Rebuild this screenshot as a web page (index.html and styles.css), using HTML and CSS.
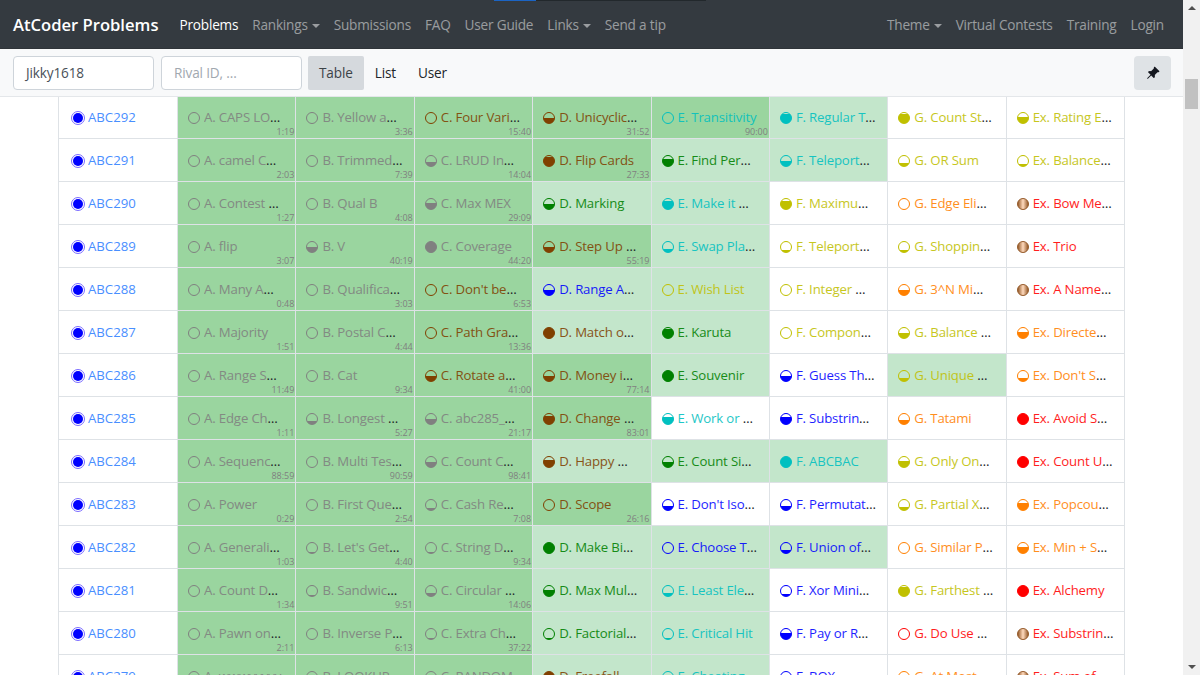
FILE: index.html
```html
<!DOCTYPE html>
<html lang="en">
<head>
<meta charset="utf-8">
<title>AtCoder Problems</title>
<link rel="stylesheet" href="styles.css">
</head>
<body>
<div class="page">
<div class="content">
<nav class="nav">
<div class="progress"><span class="progress-fill"></span></div>
<a class="brand">AtCoder Problems</a>
<ul class="menu">
<li class="active">Problems</li><li class="caret">Rankings</li><li>Submissions</li><li>FAQ</li><li>User Guide</li><li class="caret">Links</li><li>Send a tip</li>
</ul>
<ul class="menu menu-right">
<li class="caret">Theme</li><li>Virtual Contests</li><li>Training</li><li>Login</li>
</ul>
</nav>
<div class="toolbar">
<div class="field">Jikky1618</div>
<div class="field placeholder">Rival ID, ...</div>
<div class="tabs"><span class="tab tab-on">Table</span><span class="tab">List</span><span class="tab">User</span></div>
<button class="pin"><svg viewBox="0 0 16 16" width="14" height="14"><path fill="#14171f" d="M9.828.722a.5.5 0 0 1 .354.146l4.95 4.95a.5.5 0 0 1 0 .707c-.48.48-1.072.588-1.503.588-.177 0-.335-.018-.46-.039l-3.134 3.134a5.927 5.927 0 0 1 .16 1.013c.046.702-.032 1.687-.72 2.375a.5.5 0 0 1-.707 0l-2.829-2.828-3.182 3.182c-.195.195-1.219.902-1.414.707-.195-.195.512-1.22.707-1.414l3.182-3.182-2.828-2.829a.5.5 0 0 1 0-.707c.688-.688 1.673-.767 2.375-.72a5.922 5.922 0 0 1 1.013.16l3.134-3.133a2.772 2.772 0 0 1-.04-.461c0-.43.108-1.022.589-1.503a.5.5 0 0 1 .353-.146z"/></svg></button>
</div>
<main class="scroller">
<table class="grid">
<colgroup><col class="col-contest"><col><col><col><col><col><col><col><col></colgroup>
<tbody>
<tr><td class="contest"><i class="ring"></i><a>ABC292</a></td>
<td class="dk"><i class="dot grey" style="--f:0%"></i><a class="grey">A. CAPS LO</a><b>…</b><small>1:19</small></td>
<td class="dk"><i class="dot grey" style="--f:0%"></i><a class="grey">B. Yellow a</a><b>…</b><small>3:36</small></td>
<td class="dk"><i class="dot brown" style="--f:0%"></i><a class="brown">C. Four Vari</a><b>…</b><small>15:40</small></td>
<td class="dk"><i class="dot brown" style="--f:50%"></i><a class="brown">D. Unicyclic</a><b>…</b><small>31:52</small></td>
<td class="dk"><i class="dot cyan" style="--f:0%"></i><a class="cyan">E. Transitivity</a><small>90:00</small></td>
<td class="lt"><i class="dot cyan" style="--f:90%"></i><a class="cyan">F. Regular T</a><b>…</b></td>
<td><i class="dot yellow" style="--f:90%"></i><a class="yellow">G. Count St</a><b>…</b></td>
<td><i class="dot yellow" style="--f:65%"></i><a class="yellow">Ex. Rating E</a><b>…</b></td></tr>
<tr><td class="contest"><i class="ring"></i><a>ABC291</a></td>
<td class="dk"><i class="dot grey" style="--f:0%"></i><a class="grey">A. camel C</a><b>…</b><small>2:03</small></td>
<td class="dk"><i class="dot grey" style="--f:0%"></i><a class="grey">B. Trimmed</a><b>…</b><small>7:39</small></td>
<td class="dk"><i class="dot grey" style="--f:45%"></i><a class="grey">C. LRUD In</a><b>…</b><small>14:04</small></td>
<td class="dk"><i class="dot brown" style="--f:90%"></i><a class="brown">D. Flip Cards</a><small>27:33</small></td>
<td class="lt"><i class="dot green" style="--f:70%"></i><a class="green">E. Find Per</a><b>…</b></td>
<td class="lt"><i class="dot cyan" style="--f:50%"></i><a class="cyan">F. Teleport</a><b>…</b></td>
<td><i class="dot yellow" style="--f:35%"></i><a class="yellow">G. OR Sum</a></td>
<td><i class="dot yellow" style="--f:15%"></i><a class="yellow">Ex. Balance</a><b>…</b></td></tr>
<tr><td class="contest"><i class="ring"></i><a>ABC290</a></td>
<td class="dk"><i class="dot grey" style="--f:0%"></i><a class="grey">A. Contest </a><b>…</b><small>1:27</small></td>
<td class="dk"><i class="dot grey" style="--f:0%"></i><a class="grey">B. Qual B</a><small>4:08</small></td>
<td class="dk"><i class="dot grey" style="--f:60%"></i><a class="grey">C. Max MEX</a><small>29:09</small></td>
<td class="lt"><i class="dot green" style="--f:50%"></i><a class="green">D. Marking</a></td>
<td class="lt"><i class="dot cyan" style="--f:85%"></i><a class="cyan">E. Make it </a><b>…</b></td>
<td><i class="dot yellow" style="--f:85%"></i><a class="yellow">F. Maximu</a><b>…</b></td>
<td><i class="dot orange" style="--f:0%"></i><a class="orange">G. Edge Eli</a><b>…</b></td>
<td><i class="dot bronze"></i><a class="red">Ex. Bow Me</a><b>…</b></td></tr>
<tr><td class="contest"><i class="ring"></i><a>ABC289</a></td>
<td class="dk"><i class="dot grey" style="--f:0%"></i><a class="grey">A. flip</a><small>3:07</small></td>
<td class="dk"><i class="dot grey" style="--f:50%"></i><a class="grey">B. V</a><small>40:19</small></td>
<td class="dk"><i class="dot grey" style="--f:100%"></i><a class="grey">C. Coverage</a><small>44:20</small></td>
<td class="dk"><i class="dot brown" style="--f:50%"></i><a class="brown">D. Step Up </a><b>…</b><small>55:19</small></td>
<td class="lt"><i class="dot cyan" style="--f:35%"></i><a class="cyan">E. Swap Pla</a><b>…</b></td>
<td><i class="dot yellow" style="--f:20%"></i><a class="yellow">F. Teleport</a><b>…</b></td>
<td><i class="dot yellow" style="--f:20%"></i><a class="yellow">G. Shoppin</a><b>…</b></td>
<td><i class="dot bronze"></i><a class="red">Ex. Trio</a></td></tr>
<tr><td class="contest"><i class="ring"></i><a>ABC288</a></td>
<td class="dk"><i class="dot grey" style="--f:0%"></i><a class="grey">A. Many A</a><b>…</b><small>0:48</small></td>
<td class="dk"><i class="dot grey" style="--f:0%"></i><a class="grey">B. Qualifica</a><b>…</b><small>3:03</small></td>
<td class="dk"><i class="dot brown" style="--f:0%"></i><a class="brown">C. Don't be</a><b>…</b><small>6:53</small></td>
<td class="lt"><i class="dot blue" style="--f:50%"></i><a class="blue">D. Range A</a><b>…</b></td>
<td class="lt"><i class="dot yellow" style="--f:0%"></i><a class="yellow">E. Wish List</a></td>
<td><i class="dot yellow" style="--f:0%"></i><a class="yellow">F. Integer </a><b>…</b></td>
<td><i class="dot orange" style="--f:55%"></i><a class="orange">G. 3^N Mi</a><b>…</b></td>
<td><i class="dot bronze"></i><a class="red">Ex. A Name</a><b>…</b></td></tr>
<tr><td class="contest"><i class="ring"></i><a>ABC287</a></td>
<td class="dk"><i class="dot grey" style="--f:0%"></i><a class="grey">A. Majority</a><small>1:51</small></td>
<td class="dk"><i class="dot grey" style="--f:0%"></i><a class="grey">B. Postal C</a><b>…</b><small>4:44</small></td>
<td class="dk"><i class="dot brown" style="--f:0%"></i><a class="brown">C. Path Gra</a><b>…</b><small>13:36</small></td>
<td class="lt"><i class="dot brown" style="--f:100%"></i><a class="brown">D. Match o</a><b>…</b></td>
<td class="lt"><i class="dot green" style="--f:90%"></i><a class="green">E. Karuta</a></td>
<td><i class="dot yellow" style="--f:0%"></i><a class="yellow">F. Compon</a><b>…</b></td>
<td><i class="dot yellow" style="--f:50%"></i><a class="yellow">G. Balance </a><b>…</b></td>
<td><i class="dot orange" style="--f:60%"></i><a class="orange">Ex. Directe</a><b>…</b></td></tr>
<tr><td class="contest"><i class="ring"></i><a>ABC286</a></td>
<td class="dk"><i class="dot grey" style="--f:0%"></i><a class="grey">A. Range S</a><b>…</b><small>11:49</small></td>
<td class="dk"><i class="dot grey" style="--f:0%"></i><a class="grey">B. Cat</a><small>9:34</small></td>
<td class="dk"><i class="dot brown" style="--f:50%"></i><a class="brown">C. Rotate a</a><b>…</b><small>41:00</small></td>
<td class="dk"><i class="dot brown" style="--f:50%"></i><a class="brown">D. Money i</a><b>…</b><small>77:14</small></td>
<td class="lt"><i class="dot green" style="--f:100%"></i><a class="green">E. Souvenir</a></td>
<td><i class="dot blue" style="--f:50%"></i><a class="blue">F. Guess Th</a><b>…</b></td>
<td class="lt"><i class="dot yellow" style="--f:30%"></i><a class="yellow">G. Unique </a><b>…</b></td>
<td><i class="dot orange" style="--f:25%"></i><a class="orange">Ex. Don't S</a><b>…</b></td></tr>
<tr><td class="contest"><i class="ring"></i><a>ABC285</a></td>
<td class="dk"><i class="dot grey" style="--f:0%"></i><a class="grey">A. Edge Ch</a><b>…</b><small>1:11</small></td>
<td class="dk"><i class="dot grey" style="--f:30%"></i><a class="grey">B. Longest </a><b>…</b><small>5:27</small></td>
<td class="dk"><i class="dot grey" style="--f:50%"></i><a class="grey">C. abc285_</a><b>…</b><small>21:17</small></td>
<td class="dk"><i class="dot brown" style="--f:80%"></i><a class="brown">D. Change </a><b>…</b><small>83:01</small></td>
<td><i class="dot cyan" style="--f:70%"></i><a class="cyan">E. Work or </a><b>…</b></td>
<td><i class="dot blue" style="--f:70%"></i><a class="blue">F. Substrin</a><b>…</b></td>
<td><i class="dot orange" style="--f:40%"></i><a class="orange">G. Tatami</a></td>
<td><i class="dot red" style="--f:100%"></i><a class="red">Ex. Avoid S</a><b>…</b></td></tr>
<tr><td class="contest"><i class="ring"></i><a>ABC284</a></td>
<td class="dk"><i class="dot grey" style="--f:0%"></i><a class="grey">A. Sequenc</a><b>…</b><small>88:59</small></td>
<td class="dk"><i class="dot grey" style="--f:0%"></i><a class="grey">B. Multi Tes</a><b>…</b><small>90:59</small></td>
<td class="dk"><i class="dot grey" style="--f:50%"></i><a class="grey">C. Count C</a><b>…</b><small>98:41</small></td>
<td class="lt"><i class="dot brown" style="--f:70%"></i><a class="brown">D. Happy </a><b>…</b></td>
<td class="lt"><i class="dot green" style="--f:50%"></i><a class="green">E. Count Si</a><b>…</b></td>
<td class="lt"><i class="dot cyan" style="--f:100%"></i><a class="cyan">F. ABCBAC</a></td>
<td><i class="dot yellow" style="--f:60%"></i><a class="yellow">G. Only On</a><b>…</b></td>
<td><i class="dot red" style="--f:100%"></i><a class="red">Ex. Count U</a><b>…</b></td></tr>
<tr><td class="contest"><i class="ring"></i><a>ABC283</a></td>
<td class="dk"><i class="dot grey" style="--f:0%"></i><a class="grey">A. Power</a><small>0:29</small></td>
<td class="dk"><i class="dot grey" style="--f:0%"></i><a class="grey">B. First Que</a><b>…</b><small>2:54</small></td>
<td class="dk"><i class="dot grey" style="--f:15%"></i><a class="grey">C. Cash Re</a><b>…</b><small>7:08</small></td>
<td class="dk"><i class="dot brown" style="--f:0%"></i><a class="brown">D. Scope</a><small>26:16</small></td>
<td><i class="dot blue" style="--f:40%"></i><a class="blue">E. Don't Iso</a><b>…</b></td>
<td><i class="dot blue" style="--f:40%"></i><a class="blue">F. Permutat</a><b>…</b></td>
<td><i class="dot yellow" style="--f:25%"></i><a class="yellow">G. Partial X</a><b>…</b></td>
<td><i class="dot orange" style="--f:70%"></i><a class="orange">Ex. Popcou</a><b>…</b></td></tr>
<tr><td class="contest"><i class="ring"></i><a>ABC282</a></td>
<td class="dk"><i class="dot grey" style="--f:0%"></i><a class="grey">A. Generali</a><b>…</b><small>1:03</small></td>
<td class="dk"><i class="dot grey" style="--f:10%"></i><a class="grey">B. Let's Get</a><b>…</b><small>4:40</small></td>
<td class="dk"><i class="dot grey" style="--f:10%"></i><a class="grey">C. String D</a><b>…</b><small>9:34</small></td>
<td class="lt"><i class="dot green" style="--f:100%"></i><a class="green">D. Make Bi</a><b>…</b></td>
<td class="lt"><i class="dot blue" style="--f:0%"></i><a class="blue">E. Choose T</a><b>…</b></td>
<td class="lt"><i class="dot blue" style="--f:30%"></i><a class="blue">F. Union of</a><b>…</b></td>
<td><i class="dot orange" style="--f:0%"></i><a class="orange">G. Similar P</a><b>…</b></td>
<td><i class="dot orange" style="--f:60%"></i><a class="orange">Ex. Min + S</a><b>…</b></td></tr>
<tr><td class="contest"><i class="ring"></i><a>ABC281</a></td>
<td class="dk"><i class="dot grey" style="--f:0%"></i><a class="grey">A. Count D</a><b>…</b><small>1:34</small></td>
<td class="dk"><i class="dot grey" style="--f:10%"></i><a class="grey">B. Sandwic</a><b>…</b><small>9:51</small></td>
<td class="dk"><i class="dot grey" style="--f:25%"></i><a class="grey">C. Circular </a><b>…</b><small>14:06</small></td>
<td class="lt"><i class="dot green" style="--f:60%"></i><a class="green">D. Max Mul</a><b>…</b></td>
<td class="lt"><i class="dot cyan" style="--f:35%"></i><a class="cyan">E. Least Ele</a><b>…</b></td>
<td><i class="dot blue" style="--f:15%"></i><a class="blue">F. Xor Mini</a><b>…</b></td>
<td><i class="dot yellow" style="--f:90%"></i><a class="yellow">G. Farthest </a><b>…</b></td>
<td><i class="dot red" style="--f:100%"></i><a class="red">Ex. Alchemy</a></td></tr>
<tr><td class="contest"><i class="ring"></i><a>ABC280</a></td>
<td class="dk"><i class="dot grey" style="--f:0%"></i><a class="grey">A. Pawn on</a><b>…</b><small>2:11</small></td>
<td class="dk"><i class="dot grey" style="--f:0%"></i><a class="grey">B. Inverse P</a><b>…</b><small>6:13</small></td>
<td class="dk"><i class="dot grey" style="--f:10%"></i><a class="grey">C. Extra Ch</a><b>…</b><small>37:22</small></td>
<td class="lt"><i class="dot green" style="--f:5%"></i><a class="green">D. Factorial</a><b>…</b></td>
<td class="lt"><i class="dot cyan" style="--f:5%"></i><a class="cyan">E. Critical Hit</a></td>
<td><i class="dot blue" style="--f:60%"></i><a class="blue">F. Pay or R</a><b>…</b></td>
<td><i class="dot red" style="--f:0%"></i><a class="red">G. Do Use </a><b>…</b></td>
<td><i class="dot bronze"></i><a class="red">Ex. Substrin</a><b>…</b></td></tr>
<tr><td class="contest"><i class="ring"></i><a>ABC279</a></td>
<td class="dk"><i class="dot grey" style="--f:0%"></i><a class="grey">A. wwwvvvvv</a></td>
<td class="dk"><i class="dot grey" style="--f:0%"></i><a class="grey">B. LOOKUP</a></td>
<td class="dk"><i class="dot grey" style="--f:0%"></i><a class="grey">C. RANDOM</a></td>
<td class="lt"><i class="dot brown" style="--f:100%"></i><a class="brown">D. Freefall</a></td>
<td class="lt"><i class="dot cyan" style="--f:0%"></i><a class="cyan">E. Cheating</a></td>
<td><i class="dot blue" style="--f:0%"></i><a class="blue">F. BOX</a></td>
<td><i class="dot orange" style="--f:0%"></i><a class="orange">G. At Most</a></td>
<td><i class="dot bronze"></i><a class="red">Ex. Sum of</a></td></tr>
</tbody>
</table>
</main>
</div>
<aside class="scrollbar">
<span class="arrow-up"></span>
<span class="thumb"></span>
<span class="arrow-down"></span>
</aside>
</div>
</body>
</html>
```
FILE: styles.css
```css
* { box-sizing: border-box; }
html, body { margin: 0; height: 100%; overflow: hidden; }
body { font-family: "Open Sans", "Noto Sans", "Liberation Sans", sans-serif; font-size: 13.2px; letter-spacing: -0.15px; color: #212529; background: #fff; }
.page { display: flex; height: 675px; }
.content { flex: 1; min-width: 0; display: flex; flex-direction: column; }

.nav { position: relative; height: 49px; flex: none; display: flex; align-items: center; padding: 0 12px 0 13px; background: #343a40; border-bottom: 1px solid #2f3439; font-size: 13.6px; letter-spacing: -0.2px; }
.progress { position: absolute; left: 494px; top: 0; width: 212px; height: 1px; background: #22282c; }
.progress-fill { display: block; width: 42px; height: 1px; background: #1b64c4; }
.brand { font-size: 16.6px; font-weight: 600; letter-spacing: 0; color: #fff; margin-right: 14px; white-space: nowrap; }
.menu { list-style: none; display: flex; margin: 0; padding: 0; white-space: nowrap; }
.menu li { padding: 0 7px; color: rgba(255, 255, 255, 0.5); }
.menu .active { color: #fff; }
.menu-right { margin-left: auto; }
.caret::after { content: ""; display: inline-block; margin-left: 4px; vertical-align: 2px; border-top: 4px solid; border-left: 4px solid transparent; border-right: 4px solid transparent; }

.toolbar { height: 48px; flex: none; display: flex; align-items: center; gap: 7px; padding: 1px 12px 0 13px; background: #f8f9fa; border-bottom: 1px solid #e4e7ea; font-size: 13.6px; }
.field { width: 141px; height: 34px; padding: 0 12px; line-height: 32px; background: #fff; border: 1px solid #ced4da; border-radius: 4px; color: #495057; }
.placeholder { color: #a1a8af; }
.tabs { display: flex; margin-left: -1px; }
.tab { padding: 0 11px; height: 34px; line-height: 34px; }
.tab-on { background: #d5d9dd; border-radius: 2px; color: #3c4247; }
.pin { margin-left: auto; width: 37px; height: 34px; padding: 0; display: flex; align-items: center; justify-content: center; background: #dfe3e6; border: 0; border-radius: 4px; }

.scroller { flex: 1; min-height: 0; overflow: hidden; padding: 0 58px; }
.grid { width: 1067px; margin-top: -2px; table-layout: fixed; border-collapse: collapse; }
.col-contest { width: 119px; }
.grid td { position: relative; height: 43px; padding: 0 0 0 10px; border: 1px solid #dee2e6; white-space: nowrap; overflow: hidden; }
.grid .dk { background: #9ad59f; }
.grid .lt { background: #c3e6cb; }
.grid .contest { padding-left: 12px; letter-spacing: 0; }
.grid a { opacity: 0.88; }
.grid small { position: absolute; right: 1px; bottom: 0; font-size: 9px; letter-spacing: 0; line-height: 12px; color: #808080; }
.grid b { font-weight: 400; color: #212529; }

.dot { display: inline-block; width: 12px; height: 12px; margin-right: 4px; vertical-align: -1.5px; border-radius: 50%; border: 1.5px solid currentColor; background: linear-gradient(to top, currentColor var(--f), transparent var(--f)); }
.dot.bronze { border-color: #965c2c; background: linear-gradient(to right, #965c2c, #ffdabd, #965c2c); }
.ring { display: inline-block; width: 14px; height: 14px; margin-right: 3px; vertical-align: -2.5px; padding: 1px; border-radius: 50%; border: 1px solid #7b6cff; background: #00f content-box; }
.contest a { color: #2f80ff; }

.grey { color: #808080; }
.brown { color: #804000; }
.green { color: #008000; }
.cyan { color: #00c0c0; }
.blue { color: #0000ff; }
.yellow { color: #c0c000; }
.orange { color: #ff8000; }
.red { color: #ff0000; }

.scrollbar { width: 17px; flex: none; display: flex; flex-direction: column; align-items: center; position: relative; background: #f1f1f1; }
.arrow-up { margin-top: 6px; border-bottom: 4px solid #505050; border-left: 4px solid transparent; border-right: 4px solid transparent; }
.thumb { position: absolute; top: 79px; left: 2px; width: 13px; height: 30px; background: #c1c1c1; }
.arrow-down { margin-top: auto; margin-bottom: 6px; border-top: 4px solid #505050; border-left: 4px solid transparent; border-right: 4px solid transparent; }
```
